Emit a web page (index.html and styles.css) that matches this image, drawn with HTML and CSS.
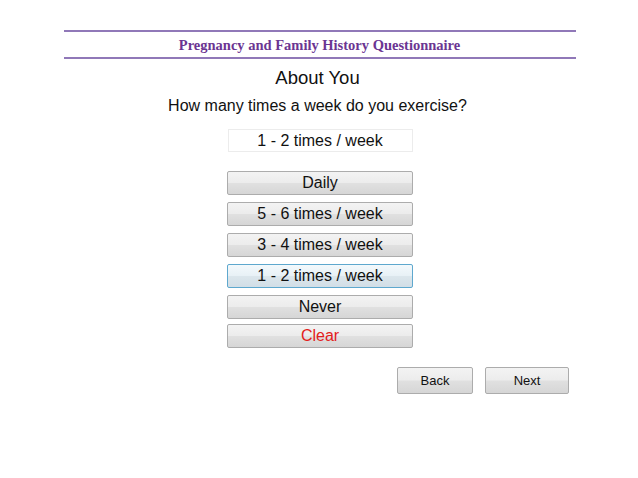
FILE: index.html
```html
<!DOCTYPE html>
<html lang="en">
  <head>
    <meta charset="UTF-8" />
    <meta name="viewport" content="width=device-width, initial-scale=1.0" />
    <title>Questionnaire</title>
    <link rel="stylesheet" href="styles.css">
  </head>
  <body>
    <div class="page">
      <div class="banner">Pregnancy and Family History Questionnaire</div>
      <h1 class="section">About You</h1>
      <p class="question">How many times a week do you exercise?</p>
      <div class="answer">1 - 2 times / week</div>
      <div class="choices">
        <button class="choice">Daily</button>
        <button class="choice">5 - 6 times / week</button>
        <button class="choice">3 - 4 times / week</button>
        <button class="choice selected">1 - 2 times / week</button>
        <button class="choice">Never</button>
        <button class="choice clear">Clear</button>
      </div>
      <div class="nav">
        <button class="navbtn back">Back</button>
        <button class="navbtn next">Next</button>
      </div>
    </div>
  </body>
</html>
```

FILE: styles.css
```css
body {
  margin: 0;
  background: #fff;
  font-family: "Liberation Sans", Arial, sans-serif;
  color: #111;
}

.page {
  padding-top: 30px;
  display: flex;
  flex-direction: column;
  align-items: center;
}

.banner {
  width: 512px;
  margin-left: 1px;
  border-top: 2px solid #9078b8;
  border-bottom: 2px solid #9078b8;
  height: 25px;
  line-height: 27px;
  text-align: center;
  font-family: "Liberation Serif", "Times New Roman", serif;
  font-weight: bold;
  font-size: 14.5px;
  color: #6b3592;
}

.section {
  margin: 7px 0 0 -3px;
  font-size: 18.5px;
  font-weight: normal;
  line-height: 24px;
}

.question {
  margin: 5px 0 0 -3px;
  font-size: 16px;
  line-height: 22px;
}

.answer {
  margin: 12px 0 0 2px;
  width: 183px;
  height: 21px;
  line-height: 21px;
  border: 1px solid #ececec;
  text-align: center;
  font-size: 16px;
}

.choices {
  margin: 19px 0 0 2px;
  display: flex;
  flex-direction: column;
  gap: 7px;
}

.choice,
.navbtn {
  font-family: "Liberation Sans", Arial, sans-serif;
  color: #111;
  border: 1px solid #acacac;
  border-radius: 2px;
  background: linear-gradient(#f3f3f3 0%, #ececec 48%, #e0e0e0 52%, #d6d6d6 100%);
  padding: 0;
}

.choice {
  width: 186px;
  height: 24px;
  font-size: 16px;
  line-height: 22px;
}

.choice.selected {
  border-color: #5ea8ce;
  background: linear-gradient(#f3f9fc 0%, #e8f1f6 48%, #dbe6ec 52%, #d2dee6 100%);
}

.choice.clear {
  margin-top: -2px;
  color: #e31b1b;
}

.nav {
  margin: 19px 0 0 328px;
  display: flex;
  gap: 12px;
}

.navbtn {
  height: 27px;
  font-size: 13px;
}

.back {
  width: 76px;
}

.next {
  width: 84px;
}
```
